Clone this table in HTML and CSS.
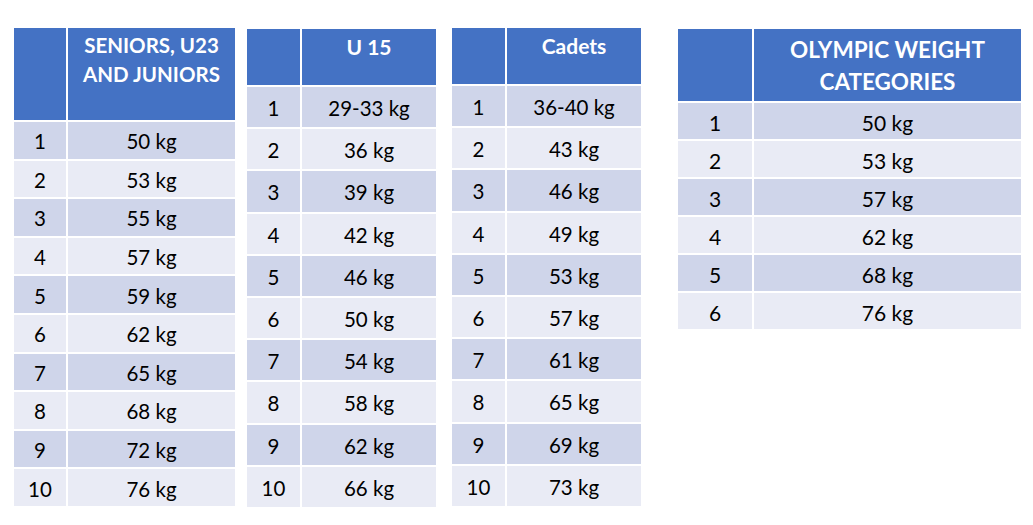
FILE: index.html
```html
<!DOCTYPE html>
<html>
<head>
<meta charset="utf-8">
<link rel="stylesheet" href="styles.css">
</head>
<body>
<div class="page">
  <div class="tbl t1">
    <div class="h"></div><div class="h">SENIORS, U23<br>AND JUNIORS</div>
    <div class="c o">1</div><div class="c o">50 kg</div>
    <div class="c e">2</div><div class="c e">53 kg</div>
    <div class="c o">3</div><div class="c o">55 kg</div>
    <div class="c e">4</div><div class="c e">57 kg</div>
    <div class="c o">5</div><div class="c o">59 kg</div>
    <div class="c e">6</div><div class="c e">62 kg</div>
    <div class="c o">7</div><div class="c o">65 kg</div>
    <div class="c e">8</div><div class="c e">68 kg</div>
    <div class="c o">9</div><div class="c o">72 kg</div>
    <div class="c e">10</div><div class="c e">76 kg</div>
  </div>
  <div class="tbl t2">
    <div class="h"></div><div class="h">U 15</div>
    <div class="c o">1</div><div class="c o">29-33 kg</div>
    <div class="c e">2</div><div class="c e">36 kg</div>
    <div class="c o">3</div><div class="c o">39 kg</div>
    <div class="c e">4</div><div class="c e">42 kg</div>
    <div class="c o">5</div><div class="c o">46 kg</div>
    <div class="c e">6</div><div class="c e">50 kg</div>
    <div class="c o">7</div><div class="c o">54 kg</div>
    <div class="c e">8</div><div class="c e">58 kg</div>
    <div class="c o">9</div><div class="c o">62 kg</div>
    <div class="c e">10</div><div class="c e">66 kg</div>
  </div>
  <div class="tbl t3">
    <div class="h"></div><div class="h">Cadets</div>
    <div class="c o">1</div><div class="c o">36-40 kg</div>
    <div class="c e">2</div><div class="c e">43 kg</div>
    <div class="c o">3</div><div class="c o">46 kg</div>
    <div class="c e">4</div><div class="c e">49 kg</div>
    <div class="c o">5</div><div class="c o">53 kg</div>
    <div class="c e">6</div><div class="c e">57 kg</div>
    <div class="c o">7</div><div class="c o">61 kg</div>
    <div class="c e">8</div><div class="c e">65 kg</div>
    <div class="c o">9</div><div class="c o">69 kg</div>
    <div class="c e">10</div><div class="c e">73 kg</div>
  </div>
  <div class="tbl t4">
    <div class="h"></div><div class="h">OLYMPIC WEIGHT<br>CATEGORIES</div>
    <div class="c o">1</div><div class="c o">50 kg</div>
    <div class="c e">2</div><div class="c e">53 kg</div>
    <div class="c o">3</div><div class="c o">57 kg</div>
    <div class="c e">4</div><div class="c e">62 kg</div>
    <div class="c o">5</div><div class="c o">68 kg</div>
    <div class="c e">6</div><div class="c e">76 kg</div>
  </div>
</div>
</body>
</html>
```
FILE: styles.css
```css
html, body {
  margin: 0;
  padding: 0;
  background: #fff;
}
body {
  width: 1033px;
  height: 525px;
  overflow: hidden;
  font-family: "Lato", "Open Sans", sans-serif;
}
.page {
  display: flex;
  align-items: flex-start;
  padding: 28px 0 0 14px;
}
.tbl {
  display: grid;
  column-gap: 2px;
  row-gap: 2px;
}
.h {
  background: #4472c4;
  color: #fff;
  font-weight: 700;
  text-align: center;
  font-size: 20.5px;
  line-height: 29px;
  padding-top: 3px;
  box-sizing: border-box;
}
.c {
  display: flex;
  align-items: center;
  justify-content: center;
  font-size: 20.5px;
  color: #000;
  padding-top: 2px;
  box-sizing: border-box;
}
.o { background: #cfd5ea; }
.e { background: #e9ebf5; }

.t1 {
  grid-template-columns: 52px 167px;
  grid-template-rows: 92px repeat(10, 36.6px);
}
.t2 {
  margin-left: 12px;
  margin-top: 1px;
  grid-template-columns: 53px 134px;
  grid-template-rows: 56px repeat(10, 40.2px);
}
.t2 .h, .t3 .h { padding-top: 3px; font-size: 21px; }
.t3 {
  margin-left: 16px;
  grid-template-columns: 53px 134px;
  grid-template-rows: 56px repeat(10, 40.2px);
}
.t4 {
  margin-left: 37px;
  margin-top: 1px;
  grid-template-columns: 74px 267px;
  grid-template-rows: 72px repeat(6, 36px);
}
.t4 .h {
  font-size: 22.5px;
  line-height: 32px;
  padding-top: 5px;
}
.t4 .c { font-size: 21px; }
```
